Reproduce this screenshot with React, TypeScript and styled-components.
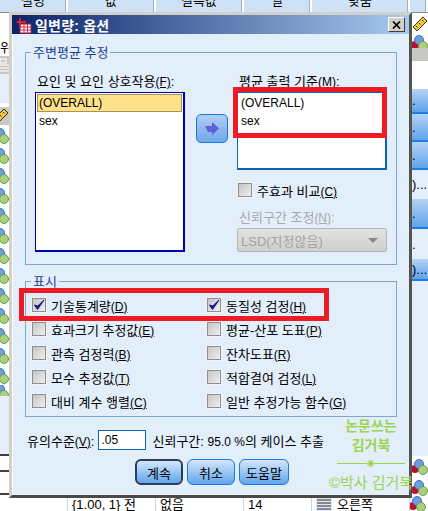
import styled, { createGlobalStyle } from "styled-components";

const GlobalStyle = createGlobalStyle`
	html, body {
		margin: 0;
		padding: 0;
		background: #ffffff;
	}
	body {
		font-family: "Liberation Sans", "Noto Sans CJK KR", sans-serif;
		font-size: 13px;
		color: #000000;
	}
`;

const Page = styled.div`
	position: relative;
	width: 428px;
	height: 511px;
	overflow: hidden;
	display: flex;
	flex-direction: column;
	background: #ffffff;
`;

/* spreadsheet behind the dialog */
const HeaderRow = styled.div`
	height: 12px;
	flex: none;
	display: grid;
	grid-template-columns: 68px 88px 88px 68px 98px 18px;
	background: #cfe1f5;
	border-bottom: 1px solid #8a8a8a;
`;

const HeaderCell = styled.div`
	border-right: 2px solid #ffffff;
	box-shadow: inset -1px 0 0 #9db2c8;
	font-size: 13px;
	line-height: 13px;
	margin-top: -6px;
	text-align: center;
	overflow: hidden;
`;

const SheetMiddle = styled.div`
	flex: 1;
	display: flex;
	justify-content: space-between;
	min-height: 0;
`;

const SideStrip = styled.div<{ $width: number }>`
	width: ${(p) => p.$width}px;
	display: flex;
	flex-direction: column;
	overflow: hidden;
`;

const StripCell = styled.div<{ $h: number; $tone?: "white" | "gray" | "pale" | "blue" }>`
	height: ${(p) => p.$h}px;
	flex: none;
	display: flex;
	align-items: center;
	overflow: hidden;
	font-size: 13px;
	white-space: nowrap;
	background: ${(p) =>
		p.$tone === "gray"
			? "#c8c8c4"
			: p.$tone === "pale"
				? "#e4effb"
				: p.$tone === "blue"
					? "linear-gradient(#b4d2f4, #5fa4ea)"
					: "#ffffff"};
	border-bottom: ${(p) => (p.$tone === "blue" ? "2px solid #1a7fe0" : "0")};
	box-sizing: border-box;
`;

const LeftIconCell = styled(StripCell)`
	justify-content: flex-end;
`;

const RuledCell = styled(StripCell)`
	border-bottom: 2px solid #404040;
`;

const BottomRow = styled.div`
	height: 14px;
	flex: none;
	display: grid;
	grid-template-columns: 68px 88px 88px 68px 98px 18px;
	font-size: 13px;
	line-height: 15px;
	white-space: nowrap;
`;

const BottomCell = styled.div`
	border-right: 1px solid #c8d4e0;
	padding-left: 4px;
	overflow: hidden;
	display: flex;
	gap: 5px;
`;

const CircleCell = styled.div`
	overflow: hidden;
	margin-top: -4px;
`;

/* dialog window */
const Dialog = styled.div`
	position: absolute;
	left: 9px;
	top: 12px;
	width: 403px;
	height: 486px;
	box-sizing: border-box;
	display: flex;
	flex-direction: column;
	background: #e3eefb;
	border: 3px solid #d4d0c8;
	border-right: 3px solid #555450;
	border-bottom: 3px solid #4a4a48;
	box-shadow: inset 1px 1px 0 #ffffff;
`;

const TitleBar = styled.div`
	height: 19px;
	flex: none;
	display: flex;
	align-items: center;
	padding: 0 4px 0 2px;
	background: linear-gradient(90deg, #0a246a, #a6caf0);
	color: #ffffff;
	font-weight: bold;
	font-size: 14px;
	gap: 3px;
`;

const TitleText = styled.span`
	flex: 1;
	letter-spacing: 0.2px;
`;

const CloseButton = styled.div`
	width: 15px;
	height: 13px;
	background: #d4d0c8;
	border: 1px solid;
	border-color: #ffffff #404040 #404040 #ffffff;
	display: flex;
	align-items: center;
	justify-content: center;
`;

const DialogBody = styled.div`
	flex: 1;
	padding: 11px 12px 0 13px;
	display: flex;
	flex-direction: column;
`;

const Group = styled.fieldset<{ $height: number; $gap: number }>`
	margin: 0 0 ${(p) => p.$gap}px;
	padding: 0;
	height: ${(p) => p.$height}px;
	box-sizing: border-box;
	border: 1px solid #7ea7d0;
	min-inline-size: 0;
`;

const GroupLegend = styled.legend`
	margin-left: 5px;
	padding: 0 2px;
	color: #1c3f94;
	font-size: 13px;
	line-height: 15px;
`;

const EstimatesGrid = styled.div`
	display: grid;
	grid-template-columns: 150px 150px;
	column-gap: 52px;
	padding: 12px 0 0 9px;
`;

const ListColumn = styled.div`
	position: relative;
	display: flex;
	flex-direction: column;
`;

const FieldLabel = styled.div<{ $off?: boolean }>`
	height: 20px;
	line-height: 20px;
	padding-left: 2px;
	white-space: nowrap;
	color: ${(p) => (p.$off ? "#a8a8a8" : "#000000")};
`;

const Key = styled.span`
	font-size: 12px;
	text-decoration: underline;
	text-underline-offset: 1px;
`;

const Numeric = styled.span`
	font-size: 12px;
`;

const ListBox = styled.div<{ $height: number; $color: string }>`
	height: ${(p) => p.$height}px;
	box-sizing: border-box;
	background: #ffffff;
	border: 2px solid ${(p) => p.$color};
	border-width: 1px 2px 2px 1px;
	padding: 1px;
	font-size: 12px;
`;

const ListItem = styled.div<{ $selected?: boolean }>`
	height: 18px;
	line-height: 16px;
	box-sizing: border-box;
	padding-left: 1px;
	background: ${(p) => (p.$selected ? "#fde28a" : "transparent")};
	border: 1px solid ${(p) => (p.$selected ? "#a8925a" : "transparent")};
`;

const MoveButton = styled.div`
	position: absolute;
	left: 161px;
	top: 42px;
	width: 32px;
	height: 29px;
	box-sizing: border-box;
	border: 1px solid #1a78e0;
	border-radius: 5px;
	background: linear-gradient(#b0cdf2, #70a8ea);
	display: flex;
	align-items: center;
	justify-content: center;
`;

const CheckRow = styled.div`
	display: flex;
	align-items: center;
	gap: 5px;
	height: 24px;
	white-space: nowrap;
`;

const CheckBox = styled.span`
	width: 14px;
	height: 14px;
	flex: none;
	box-sizing: border-box;
	border: 1px solid #8e8e8e;
	outline: 1px solid #f4f4f4;
	background: linear-gradient(135deg, #c4c4c4, #f0f0f0);
	display: flex;
	align-items: center;
	justify-content: center;
`;

const CompareRow = styled(CheckRow)`
	margin-top: 8px;
	padding-left: 1px;
`;

const AdjustLabel = styled(FieldLabel)`
	margin-top: 6px;
`;

const DisabledSelect = styled.div`
	height: 24px;
	box-sizing: border-box;
	border: 1px solid #b4b4b4;
	border-radius: 2px;
	background: linear-gradient(#e2e2e2, #cfcfcf);
	color: #a4a4a4;
	display: flex;
	align-items: center;
	justify-content: space-between;
	padding: 0 8px 0 3px;
`;

const SelectArrow = styled.span`
	width: 0;
	height: 0;
	border-left: 5px solid transparent;
	border-right: 5px solid transparent;
	border-top: 5px solid #8a8a8a;
`;

const DisplayGrid = styled.div`
	display: grid;
	grid-template-columns: 175px 175px;
	padding: 4px 0 0 6px;
	grid-auto-rows: 24px;
`;

const FooterLine = styled.div`
	display: flex;
	align-items: center;
	height: 20px;
	margin-left: 2px;
	white-space: nowrap;
`;

const AlphaInput = styled.div`
	width: 48px;
	height: 20px;
	box-sizing: border-box;
	margin: 0 6px 0 4px;
	border: 1px solid #0a64b4;
	background: #ffffff;
	font-size: 12px;
	line-height: 18px;
	padding-left: 2px;
`;

const ButtonRow = styled.div`
	display: flex;
	gap: 4px;
	margin: 9px 0 0 110px;
`;

const DialogButton = styled.div<{ $width: number; $focus?: boolean }>`
	width: ${(p) => p.$width}px;
	height: 26px;
	box-sizing: border-box;
	border: ${(p) => (p.$focus ? "2px solid #2c3e55" : "1px solid #1a78e0")};
	border-radius: 6px;
	background: linear-gradient(#d3e6fb, #62a6ec);
	display: flex;
	align-items: center;
	justify-content: center;
`;

/* red annotation boxes painted on the screenshot */
const Annotation = styled.div<{ $x: number; $y: number; $w: number; $h: number }>`
	position: absolute;
	left: ${(p) => p.$x}px;
	top: ${(p) => p.$y}px;
	width: ${(p) => p.$w}px;
	height: ${(p) => p.$h}px;
	box-sizing: border-box;
	border: 5px solid #ed1c24;
	pointer-events: none;
`;

const Watermark = styled.div`
	position: absolute;
	left: 328px;
	top: 417px;
	width: 86px;
	display: flex;
	flex-direction: column;
	align-items: center;
	color: #9ad54e;
	font-weight: bold;
	font-size: 14px;
	line-height: 19px;
	white-space: nowrap;
`;

const WatermarkRule = styled.div`
	position: relative;
	width: 68px;
	height: 1px;
	margin: 8px 0 9px;
	background: #9ad54e;

	&::after {
		content: "";
		position: absolute;
		left: 30px;
		top: -3px;
		width: 3px;
		height: 3px;
		border: 2px solid #b8e08a;
		border-radius: 50%;
		background: #8cc63f;
	}
`;

const WatermarkCredit = styled.div`
	font-weight: normal;
	font-size: 15px;
`;

const Check = () => (
	<svg width="12" height="12" viewBox="0 0 12 12">
		<path d="M1.5 6 L4.5 10.5 L11 1 L4.7 7 Z" fill="#14148c" stroke="#14148c" strokeWidth="1" />
	</svg>
);

const Circles = () => (
	<svg width="16" height="20" viewBox="0 0 16 20" style={{ flex: "none" }}>
		<circle cx="3" cy="13" r="4" fill="#c01030" />
		<circle cx="7" cy="8" r="4.5" fill="#6c9ee0" stroke="#3e72b8" />
		<circle cx="11" cy="14" r="4.5" fill="#a8d080" stroke="#6c9c40" />
	</svg>
);

const Ruler = () => (
	<svg width="16" height="16" viewBox="0 0 16 16" style={{ flex: "none" }}>
		<path d="M1 11 L11 1 L15 5 L5 15 Z" fill="#f2c832" stroke="#333333" strokeWidth="1" />
		<path d="M4 10 L5.5 11.5 M7 7 L8.5 8.5 M10 4 L11.5 5.5" stroke="#333333" />
	</svg>
);

const RoleIcon = () => (
	<svg width="9" height="16" viewBox="0 0 9 16" style={{ flex: "none" }}>
		<path d="M0 2h6v4H0zM0 8h9M0 11h9M0 14h9" fill="none" stroke="#f0f0f0" strokeWidth="1.4" />
	</svg>
);

const AlignRight = () => (
	<svg width="16" height="14" viewBox="0 0 16 14" style={{ flex: "none" }}>
		<rect width="16" height="14" fill="#dfe6ee" />
		<path d="M1 3h14M1 6h14M1 9h14M1 12h14" stroke="#303030" />
	</svg>
);

const leftCircleRows = Array.from({ length: 13 }, (_, i) => i);

const displayOptions: [string, string, boolean][] = [
	["기술통계량", "D", true],
	["동질성 검정", "H", true],
	["효과크기 추정값", "E", false],
	["평균-산포 도표", "P", false],
	["관측 검정력", "B", false],
	["잔차도표", "R", false],
	["모수 추정값", "T", false],
	["적합결여 검정", "L", false],
	["대비 계수 행렬", "C", false],
	["일반 추정가능 함수", "G", false],
];

export default function App() {
	return (
		<>
			<GlobalStyle />
			<Page>
				<HeaderRow>
					<HeaderCell>설명</HeaderCell>
					<HeaderCell>값</HeaderCell>
					<HeaderCell>결측값</HeaderCell>
					<HeaderCell>열</HeaderCell>
					<HeaderCell>맞춤</HeaderCell>
					<HeaderCell />
				</HeaderRow>
				<SheetMiddle>
					<SideStrip $width={9}>
						<StripCell $h={23} />
						<StripCell $h={20}>위</StripCell>
						<StripCell $h={18} $tone="gray">
							<RoleIcon />
						</StripCell>
						<StripCell $h={29} $tone="pale" />
						<StripCell $h={4} />
						<LeftIconCell $h={18} $tone="gray">
							<Ruler />
						</LeftIconCell>
						{leftCircleRows.map((i) => (
							<LeftIconCell key={i} $h={20}>
								<Circles />
							</LeftIconCell>
						))}
						<LeftIconCell $h={11}>
							<Circles />
						</LeftIconCell>
						<RuledCell $h={60} $tone="pale" />
						<RuledCell $h={16} />
						<RuledCell $h={23} />
					</SideStrip>
					<SideStrip $width={16}>
						<StripCell $h={22}>
							<Ruler />
						</StripCell>
						<StripCell $h={13}>
							<Circles />
						</StripCell>
						<StripCell $h={13} $tone="gray" />
						<StripCell $h={28} />
						<StripCell $h={25} $tone="blue">.</StripCell>
						<StripCell $h={28} $tone="blue">.</StripCell>
						<StripCell $h={28} $tone="blue">.</StripCell>
						<StripCell $h={29} $tone="pale">)...</StripCell>
						<StripCell $h={30} $tone="blue">.</StripCell>
						<StripCell $h={30} $tone="pale">.</StripCell>
						<StripCell $h={22} $tone="blue">)...</StripCell>
						<StripCell $h={175} $tone="pale" />
						<StripCell $h={20}>
							<Circles />
						</StripCell>
						<StripCell $h={21}>
							<Circles />
						</StripCell>
					</SideStrip>
				</SheetMiddle>
				<BottomRow>
					<BottomCell />
					<BottomCell>{"{1.00, 1} 전"}</BottomCell>
					<BottomCell>없음</BottomCell>
					<BottomCell>14</BottomCell>
					<BottomCell>
						<AlignRight />
						오른쪽
					</BottomCell>
					<CircleCell>
						<Circles />
					</CircleCell>
				</BottomRow>

				<Dialog>
					<TitleBar>
						<svg width="18" height="18" viewBox="0 0 18 18">
							<rect x="6" y="8" width="11" height="9" fill="#f4f4f4" stroke="#b02040" />
							<path d="M6 11h11M6 14h11M10 8v9M13.5 8v9" stroke="#d03050" />
							<path d="M3 6h9M6 2v9" stroke="#e02030" strokeWidth="2" />
						</svg>
						<TitleText>일변량: 옵션</TitleText>
						<CloseButton>
							<svg width="9" height="8" viewBox="0 0 9 8">
								<path d="M1 0.5 L8 7.5 M8 0.5 L1 7.5" stroke="#000000" strokeWidth="1.7" />
							</svg>
						</CloseButton>
					</TitleBar>
					<DialogBody>
						<Group $height={220} $gap={9}>
							<GroupLegend>주변평균 추정</GroupLegend>
							<EstimatesGrid>
								<ListColumn>
									<FieldLabel>
										요인 및 요인 상호작용<Key>(F)</Key>:
									</FieldLabel>
									<ListBox $height={160} $color="#0000a8">
										<ListItem $selected>(OVERALL)</ListItem>
										<ListItem>sex</ListItem>
									</ListBox>
									<MoveButton>
										<svg width="16" height="15" viewBox="0 0 16 15">
											<path d="M1 5 L8 5 L8 1 L15 7.5 L8 14 L8 11 L4 11 Z" fill="#6060d4" />
										</svg>
									</MoveButton>
								</ListColumn>
								<ListColumn>
									<FieldLabel>
										평균 출력 기준<Key>(M)</Key>:
									</FieldLabel>
									<ListBox $height={78} $color="#0a64b4">
										<ListItem>(OVERALL)</ListItem>
										<ListItem>sex</ListItem>
									</ListBox>
									<CompareRow>
										<CheckBox />
										<span>
											주효과 비교<Key>(C)</Key>
										</span>
									</CompareRow>
									<AdjustLabel $off>
										신뢰구간 조정<Key>(N)</Key>:
									</AdjustLabel>
									<DisabledSelect>
										LSD(지정않음)
										<SelectArrow />
									</DisabledSelect>
								</ListColumn>
							</EstimatesGrid>
						</Group>
						<Group $height={143} $gap={13}>
							<GroupLegend>표시</GroupLegend>
							<DisplayGrid>
								{displayOptions.map(([label, key, checked]) => (
									<CheckRow key={label}>
										<CheckBox>{checked && <Check />}</CheckBox>
										<span>
											{label}
											<Key>({key})</Key>
										</span>
									</CheckRow>
								))}
							</DisplayGrid>
						</Group>
						<FooterLine>
							<span>
								유의수준<Key>(V)</Key>:
							</span>
							<AlphaInput>.05</AlphaInput>
							<span>
								신뢰구간: <Numeric>95.0 %</Numeric>의 케이스 추출
							</span>
						</FooterLine>
						<ButtonRow>
							<DialogButton $width={48} $focus>계속</DialogButton>
							<DialogButton $width={48}>취소</DialogButton>
							<DialogButton $width={50}>도움말</DialogButton>
						</ButtonRow>
					</DialogBody>
				</Dialog>

				<Annotation $x={233} $y={87} $w={154} $h={51} />
				<Annotation $x={19} $y={288} $w={310} $h={33} />
				<Watermark>
					논문쓰는
					<span>김거북</span>
					<WatermarkRule />
					<WatermarkCredit>©박사 김거북</WatermarkCredit>
				</Watermark>
			</Page>
		</>
	);
}
